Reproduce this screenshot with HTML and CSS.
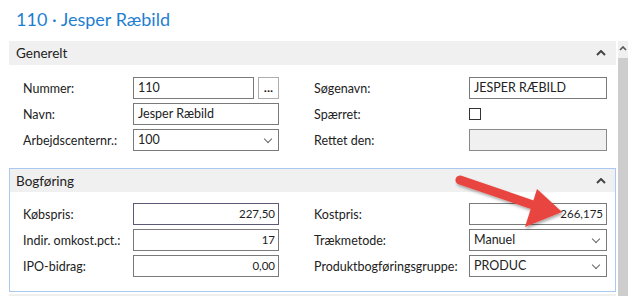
FILE: index.html
```html
<!DOCTYPE html>
<html lang="da">
<head>
  <meta charset="UTF-8" />
  <title>110 · Jesper Ræbild</title>
  <link rel="stylesheet" href="styles.css">
</head>
<body>
  <div class="card-page">
    <div class="card-main">
      <h1 class="card-title">110 · Jesper Ræbild</h1>

      <!-- Generelt -->
      <section class="card-section">
        <div class="card-section-head">
          <span>Generelt</span>
          <svg class="card-caret" width="10" height="6" viewBox="0 0 10 6"><path d="M1 5 L5 1 L9 5" fill="none" stroke="#444" stroke-width="2"/></svg>
        </div>
        <div class="card-grid">
          <div class="card-col">
            <div class="card-row">
              <label>Nummer:</label>
              <div class="card-field-group">
                <div class="card-input grow">110</div>
                <button class="card-assist">...</button>
              </div>
            </div>
            <div class="card-row">
              <label>Navn:</label>
              <div class="card-input">Jesper Ræbild</div>
            </div>
            <div class="card-row">
              <label>Arbejdscenternr.:</label>
              <div class="card-input select">100<span class="card-chev"></span></div>
            </div>
          </div>
          <div class="card-col right">
            <div class="card-row">
              <label>Søgenavn:</label>
              <div class="card-input">JESPER RÆBILD</div>
            </div>
            <div class="card-row">
              <label>Spærret:</label>
              <div class="card-check-wrap"><span class="card-check"></span></div>
            </div>
            <div class="card-row">
              <label>Rettet den:</label>
              <div class="card-input disabled"></div>
            </div>
          </div>
        </div>
      </section>

      <!-- Bogføring -->
      <section class="card-section focused">
        <div class="card-section-head">
          <span>Bogføring</span>
          <svg class="card-caret" width="10" height="6" viewBox="0 0 10 6"><path d="M1 5 L5 1 L9 5" fill="none" stroke="#444" stroke-width="2"/></svg>
        </div>
        <div class="card-grid">
          <div class="card-col">
            <div class="card-row">
              <label>Købspris:</label>
              <div class="card-input num active">227,50</div>
            </div>
            <div class="card-row">
              <label>Indir. omkost.pct.:</label>
              <div class="card-input num">17</div>
            </div>
            <div class="card-row">
              <label>IPO-bidrag:</label>
              <div class="card-input num">0,00</div>
            </div>
          </div>
          <div class="card-col right">
            <div class="card-row">
              <label>Kostpris:</label>
              <div class="card-input num">266,175</div>
            </div>
            <div class="card-row">
              <label>Trækmetode:</label>
              <div class="card-input select">Manuel<span class="card-chev"></span></div>
            </div>
            <div class="card-row">
              <label>Produktbogføringsgruppe:</label>
              <div class="card-input select">PRODUC<span class="card-chev"></span></div>
            </div>
          </div>
        </div>
      </section>
      <div class="card-next"></div>

      <!-- annotation arrow -->
      <svg class="card-arrow" width="130" height="70" viewBox="0 0 130 70">
        <defs>
          <filter id="sh" x="-20%" y="-20%" width="140%" height="160%">
            <feDropShadow dx="1" dy="2" stdDeviation="1.5" flood-color="#000" flood-opacity="0.35"/>
          </filter>
        </defs>
        <g filter="url(#sh)">
          <path d="M5 11 L78 36" stroke="#e8453f" stroke-width="9" stroke-linecap="round" fill="none"/>
          <path d="M82 20 L107 43 L70 58 Z" fill="#e8453f"/>
        </g>
      </svg>
    </div>
    <div class="card-scroll">
      <div class="card-scroll-btn">
        <svg width="8" height="5" viewBox="0 0 8 5"><path d="M1 4 L4 1 L7 4" fill="none" stroke="#555" stroke-width="1.6"/></svg>
      </div>
      <div class="card-scroll-thumb"></div>
    </div>
  </div>
</body>
</html>
```

FILE: styles.css
```css
body {
  margin: 0;
  background: #fff;
  font-family: Lato, "Noto Sans", sans-serif;
  font-size: 12.5px;
  color: #222;
  overflow: hidden;
}

.card-page {
  display: flex;
  height: 296px;
}

.card-main {
  position: relative;
  width: 616px;
  margin-right: 2px;
}

.card-title {
  margin: 0;
  height: 41px;
  padding-left: 16px;
  font-size: 18px;
  font-weight: 400;
  line-height: 39px;
  color: #1f7fd0;
  box-sizing: border-box;
}

.card-section {
  margin-left: 9px;
}

.card-section.focused {
  margin-top: 17px;
  border: 1px solid #a9c9f0;
}

.card-section-head {
  display: flex;
  align-items: center;
  justify-content: space-between;
  height: 24px;
  background: #f0f0f0;
  padding: 0 10px 0 7px;
  font-size: 13.5px;
  color: #222;
}

.focused .card-section-head {
  height: 23px;
  padding-left: 6px;
  padding-right: 9px;
}

.card-caret {
  display: block;
}

.card-grid {
  display: grid;
  grid-template-columns: 256px 293px;
  column-gap: 35px;
  padding: 12px 0 0 14px;
}

.focused .card-grid {
  padding: 11px 0 14px 13px;
}

.card-col {
  display: flex;
  flex-direction: column;
  gap: 4px;
}

.card-row {
  display: grid;
  grid-template-columns: 110px 146px;
  align-items: center;
  height: 22px;
}

.right .card-row {
  grid-template-columns: 155px 138px;
}

.card-row label {
  color: #222;
  white-space: nowrap;
}

.card-input {
  position: relative;
  height: 22px;
  box-sizing: border-box;
  border: 1px solid #7a7a7a;
  padding: 0 4px;
  line-height: 20px;
  white-space: nowrap;
  overflow: hidden;
  background: #fff;
}

.card-input.num {
  text-align: right;
  padding-right: 3px;
  font-size: 11.5px;
}

.card-input.active {
  border-color: #5b5b78;
}

.card-input.disabled {
  background: #f0f0f0;
  border-color: #8a8a8a;
}

.card-chev {
  position: absolute;
  right: 7px;
  top: 6px;
  width: 5px;
  height: 5px;
  border-right: 1px solid #666;
  border-bottom: 1px solid #666;
  transform: rotate(45deg);
}

.card-field-group {
  display: flex;
  gap: 4px;
}

.card-input.grow {
  flex: 1;
}

.card-assist {
  width: 21px;
  height: 22px;
  box-sizing: border-box;
  border: 1px solid #adadad;
  background: #fff;
  padding: 0;
  font: bold 11px "Noto Sans", sans-serif;
  color: #111;
  line-height: 14px;
}

.card-check-wrap {
  display: flex;
  align-items: center;
}

.card-check {
  width: 12px;
  height: 12px;
  border: 1px solid #333;
  box-sizing: border-box;
  display: block;
}

.card-next {
  margin: 2px 0 0 9px;
  height: 6px;
  background: #f0f0f0;
}

.card-scroll {
  width: 10px;
  margin-top: 41px;
  background: #f0f0f0;
  display: flex;
  flex-direction: column;
}

.card-scroll-btn {
  height: 17px;
  display: flex;
  justify-content: center;
  padding-top: 5px;
  box-sizing: border-box;
}

.card-scroll-btn svg {
  display: block;
}

.card-scroll-thumb {
  flex: 1;
  background: #cdcdcd;
}

.card-arrow {
  position: absolute;
  left: 455px;
  top: 169px;
}
```
